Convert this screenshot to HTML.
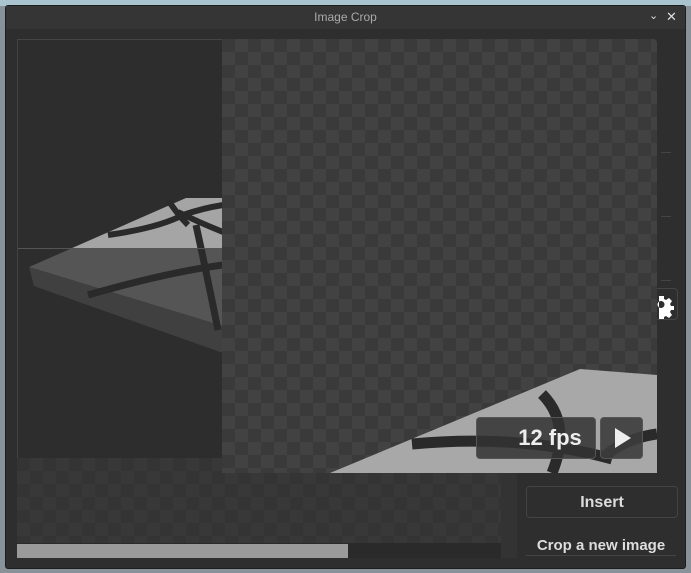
<!DOCTYPE html><html><head><style>
body{margin:0;width:691px;height:573px;overflow:hidden;background:#8a9299;font-family:"Liberation Sans",sans-serif;position:relative}
div{position:absolute;box-sizing:border-box}
.chk{background-color:#3a3a3a;background-image:linear-gradient(45deg,#424242 25%,transparent 25%,transparent 75%,#424242 75%),linear-gradient(45deg,#424242 25%,transparent 25%,transparent 75%,#424242 75%);background-size:26px 26px;background-position:0 0,13px 13px}
</style></head><body>
<div style="left:0;top:0;width:691px;height:6px;background:#a9c3cf"></div>
<div style="left:5px;top:5px;width:681px;height:564px;background:#2e2e2e;border:1px solid #1e1e1e;border-radius:3px"></div>
<div style="left:6px;top:6px;width:679px;height:23px;background:#353535;color:#aaa;font-size:12px;text-align:center;line-height:23px">Image Crop</div>
<div style="left:649px;top:9px;color:#ddd;font-size:11px">&#8964;</div>
<div style="left:666px;top:9px;color:#ddd;font-size:13px">✕</div>
<div class="chk" style="left:17px;top:458px;width:484px;height:86px;opacity:.5"></div>
<div style="left:501px;top:458px;width:16px;height:100px;background:#333"></div>
<div style="left:17px;top:543px;width:484px;height:15px;background:#2a2a2a"></div>
<div style="left:17px;top:544px;width:331px;height:14px;background:#9a9a9a"></div>
<div style="left:17px;top:39px;width:205px;height:419px;background:#2d2d2d;border-left:1px solid #444;border-top:1px solid #444;overflow:hidden">
<svg width="205" height="419" style="position:absolute;left:0;top:0">
<defs><clipPath id="top"><rect x="0" y="0" width="205" height="209"/></clipPath></defs>
<polygon points="11,227 168,158 205,158 205,286" fill="#555"/>
<polygon points="11,227 205,286 205,313 16,246" fill="#404040"/>
<polygon points="11,227 168,158 205,158 205,286" fill="#a5a5a5" clip-path="url(#top)"/>
<path d="M90,195 Q140,188 165,175 Q185,168 205,165 M160,172 Q180,182 205,192 M150,160 Q160,175 170,185" stroke="#2a2a2a" stroke-width="6" fill="none"/>
<path d="M70,255 Q150,232 205,225 M178,185 Q190,240 200,290" stroke="#2a2a2a" stroke-width="7" fill="none"/>
<rect x="0" y="208" width="205" height="1" fill="#555"/>
</svg></div>
<div class="chk" style="left:222px;top:39px;width:435px;height:434px;border-radius:0 4px 0 0;overflow:hidden">
<svg width="435" height="434" style="position:absolute;left:0;top:0">
<polygon points="108,434 358,330 435,336 435,434" fill="#a8a8a8"/>
<path d="M190,405 Q300,395 390,420 M320,355 Q350,385 330,434 M380,420 Q400,400 435,395" stroke="#2a2a2a" stroke-width="11" fill="none"/>
</svg></div>
<div style="left:476px;top:417px;width:120px;height:42px;background:rgba(50,50,50,.85);border:1px solid #555;border-radius:4px;color:#eee;font-weight:bold;font-size:22px;text-align:center;line-height:40px;padding-left:28px">12 fps</div>
<div style="left:600px;top:417px;width:43px;height:42px;background:rgba(60,60,60,.9);border:1px solid #555;border-radius:4px"><svg width="41" height="40"><polygon points="14,10 30,20 14,30" fill="#eee"/></svg></div>
<div style="left:657px;top:288px;width:21px;height:32px;border:1px solid #444;border-left:none;border-radius:0 4px 4px 0;overflow:hidden"><svg width="20" height="30"><path d="M2,7 h5 v3 l2,1 3,-2 3,3 -2,3 1,2 h3 v4 h-3 l-1,2 2,3 -3,3 -3,-2 -2,1 v3 h-5 z M4,12 a3.5,3.5 0 1,0 0.01,0 z" fill="#fff" fill-rule="evenodd"/></svg></div>
<div style="left:661px;top:152px;width:10px;height:1px;background:#444"></div>
<div style="left:661px;top:216px;width:10px;height:1px;background:#444"></div>
<div style="left:661px;top:280px;width:10px;height:1px;background:#444"></div>
<div style="left:526px;top:486px;width:152px;height:32px;border:1px solid #444;border-radius:4px;color:#ddd;font-weight:bold;font-size:16px;text-align:center;line-height:32px">Insert</div>
<div style="left:526px;top:535px;width:150px;height:21px;color:#ddd;font-weight:bold;font-size:15px;text-align:center;line-height:22px;border-bottom:1px solid #444">Crop a new image</div>
</body></html>
